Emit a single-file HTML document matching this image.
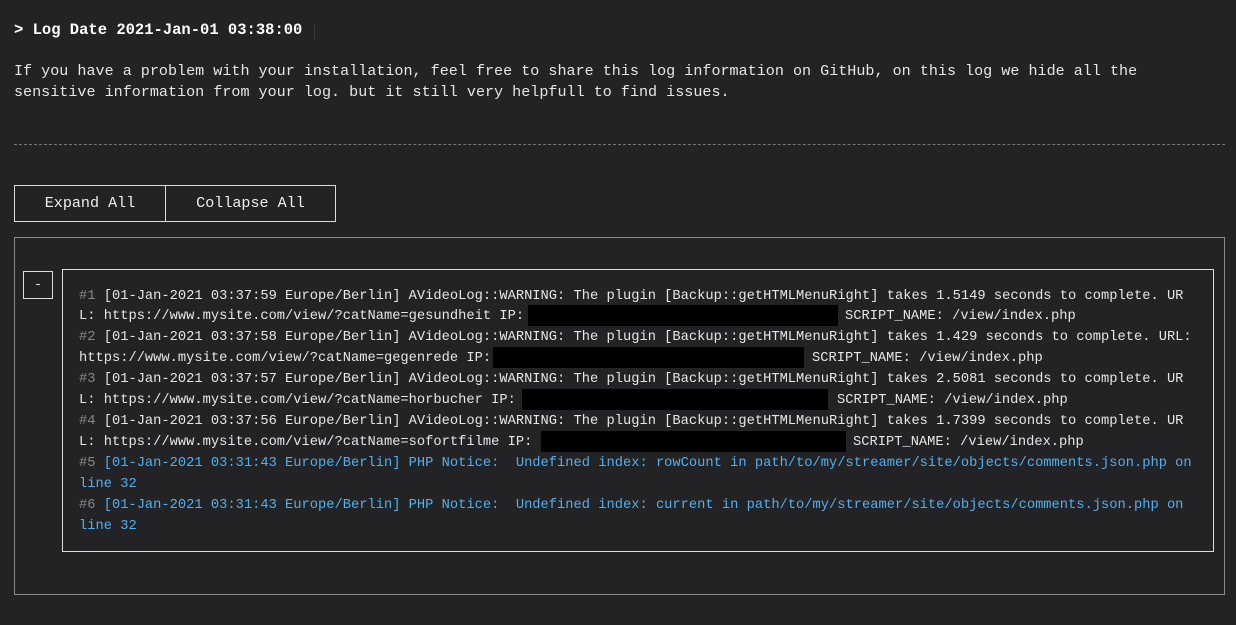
<!DOCTYPE html>
<html><head><meta charset="utf-8"><style>
*{margin:0;padding:0;box-sizing:border-box}
body{width:1236px;height:625px;background:#232326;color:#e6e6e6;font-family:"Liberation Mono",monospace;position:relative;overflow:hidden}
.a{position:absolute;white-space:pre}
.h{left:14px;top:21px;font-size:15.5px;font-weight:bold;color:#fff}
.p{left:14px;font-size:15.1px;line-height:21px;top:61px}
.hr{left:14px;top:144px;width:1211px;border-top:1px dashed #777}
.btn{top:185px;height:37px;border:1px solid #ddd;font-size:15.1px;line-height:35px;text-align:center;color:#eee}
.outer{left:14px;top:237px;width:1211px;height:358px;border:1px solid #8a8a8e}
.minus{left:23px;top:271px;width:30px;height:28px;border:1px solid #ddd;text-align:center;line-height:26px;font-size:13px}
.inner{left:62px;top:269px;width:1152px;height:283px;border:1px solid #ddd}
.l{left:79px;font-size:13.74px;line-height:21px;height:21px;color:#e6e6e6}
.n{color:#888}
.b{color:#4fb0f0}
</style></head><body>
<div class="a h">&gt; Log Date 2021-Jan-01 03:38:00</div>
<div class="a" style="left:314px;top:25px;width:1px;height:14px;background:#3a3a3d"></div>
<div class="a p">If you have a problem with your installation, feel free to share this log information on GitHub, on this log we hide all the
sensitive information from your log. but it still very helpfull to find issues.</div>
<div class="a hr"></div>
<div class="a btn" style="left:14px;width:152px">Expand All</div>
<div class="a btn" style="left:165px;width:171px">Collapse All</div>
<div class="a outer"></div>
<div class="a minus">-</div>
<div class="a inner"></div>
<div class="a l" style="top:286px"><span class="n">#1</span> [01-Jan-2021 03:37:59 Europe/Berlin] AVideoLog::WARNING: The plugin [Backup::getHTMLMenuRight] takes 1.5149 seconds to complete. UR</div>
<div class="a l" style="top:306px">L: https://www.mysite.com/view/?catName=gesundheit IP: </div>
<div class="a" style="left:528px;top:305px;width:310px;height:21px;background:#000"></div>
<div class="a l" style="top:306px;left:845px">SCRIPT_NAME: /view/index.php</div>
<div class="a l" style="top:327px"><span class="n">#2</span> [01-Jan-2021 03:37:58 Europe/Berlin] AVideoLog::WARNING: The plugin [Backup::getHTMLMenuRight] takes 1.429 seconds to complete. URL:</div>
<div class="a l" style="top:348px">https://www.mysite.com/view/?catName=gegenrede IP: </div>
<div class="a" style="left:493px;top:347px;width:311px;height:21px;background:#000"></div>
<div class="a l" style="top:348px;left:812px">SCRIPT_NAME: /view/index.php</div>
<div class="a l" style="top:369px"><span class="n">#3</span> [01-Jan-2021 03:37:57 Europe/Berlin] AVideoLog::WARNING: The plugin [Backup::getHTMLMenuRight] takes 2.5081 seconds to complete. UR</div>
<div class="a l" style="top:390px">L: https://www.mysite.com/view/?catName=horbucher IP: </div>
<div class="a" style="left:522px;top:389px;width:306px;height:21px;background:#000"></div>
<div class="a l" style="top:390px;left:837px">SCRIPT_NAME: /view/index.php</div>
<div class="a l" style="top:411px"><span class="n">#4</span> [01-Jan-2021 03:37:56 Europe/Berlin] AVideoLog::WARNING: The plugin [Backup::getHTMLMenuRight] takes 1.7399 seconds to complete. UR</div>
<div class="a l" style="top:432px">L: https://www.mysite.com/view/?catName=sofortfilme IP: </div>
<div class="a" style="left:541px;top:431px;width:305px;height:21px;background:#000"></div>
<div class="a l" style="top:432px;left:853px">SCRIPT_NAME: /view/index.php</div>
<div class="a l b" style="top:453px"><span class="n">#5</span> [01-Jan-2021 03:31:43 Europe/Berlin] PHP Notice:  Undefined index: rowCount in path/to/my/streamer/site/objects/comments.json.php on</div>
<div class="a l b" style="top:474px">line 32</div>
<div class="a l b" style="top:495px"><span class="n">#6</span> [01-Jan-2021 03:31:43 Europe/Berlin] PHP Notice:  Undefined index: current in path/to/my/streamer/site/objects/comments.json.php on</div>
<div class="a l b" style="top:516px">line 32</div>
</body></html>
